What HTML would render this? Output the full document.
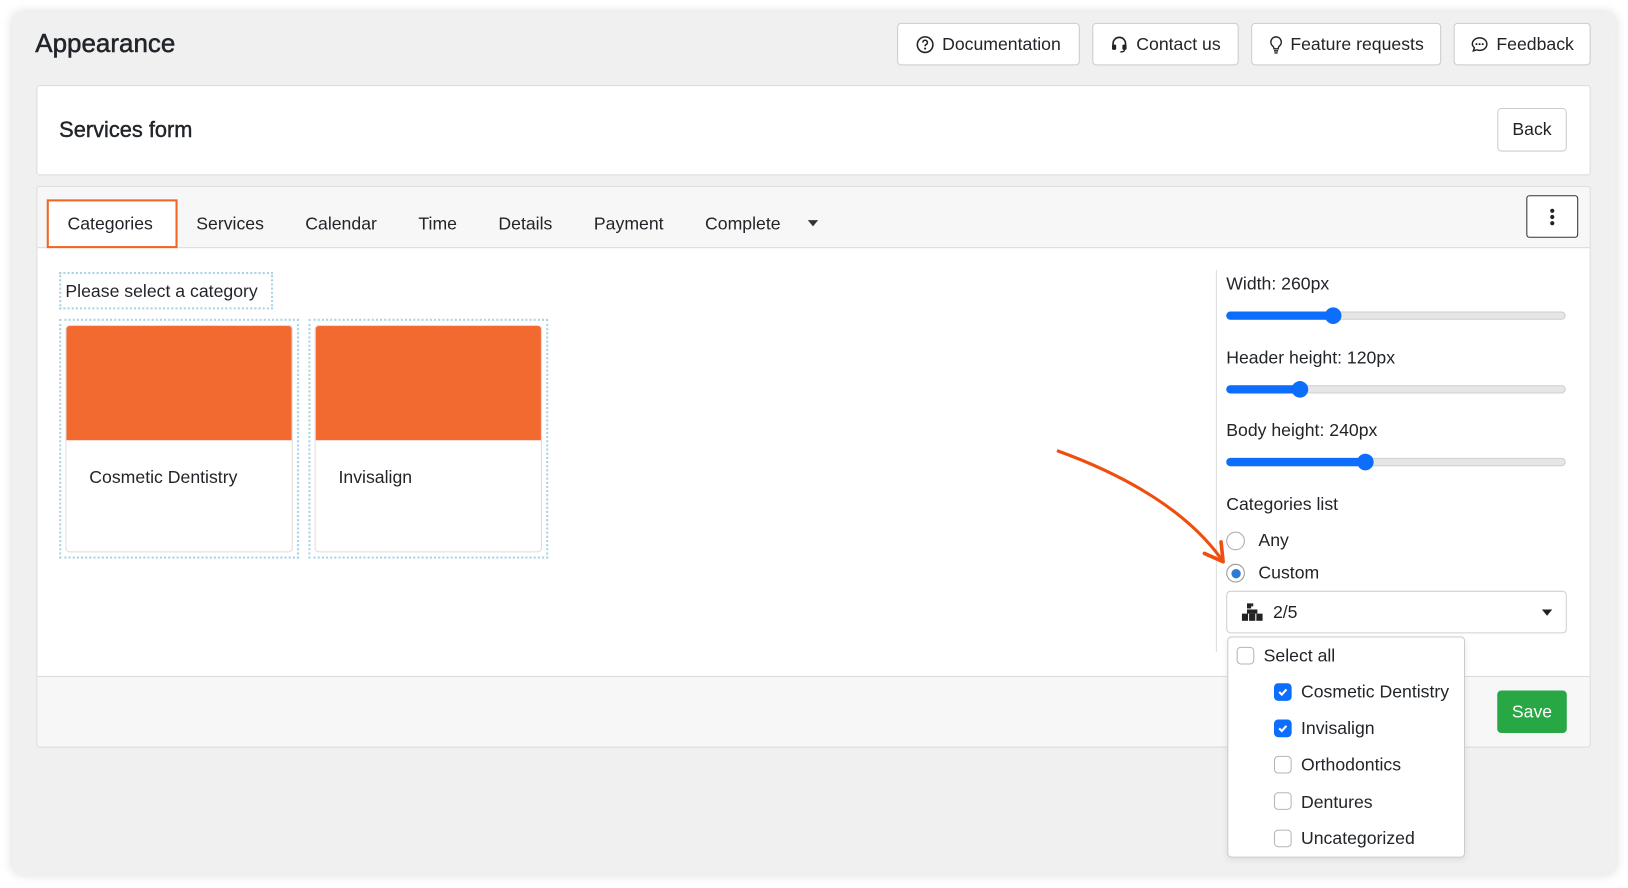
<!DOCTYPE html>
<html><head><meta charset="utf-8"><style>
*{box-sizing:border-box;margin:0;padding:0}
html,body{width:1628px;height:888px;overflow:hidden;background:#fff;font-family:"Liberation Sans",sans-serif;color:#212529}
#s{position:absolute;left:0;top:0;width:1568px;height:855px;transform:scale(1.0383);transform-origin:0 0}
.a{position:absolute}
.frame{left:12px;top:12px;width:1544px;height:830px;background:#f0f0f0;border-radius:10px;box-shadow:0 0 10px rgba(0,0,0,.15)}
.btn{position:absolute;background:#fff;border:1px solid #ccc;border-radius:4px;font-size:17px;display:flex;align-items:center;justify-content:center;gap:7px}
.card{position:absolute;background:#fff;border:1px solid #dcdcdc;border-radius:3px}
.tab{position:absolute;top:206px;font-size:17px}
.lbl{position:absolute;left:1181px;font-size:17px}
.track{position:absolute;left:1181px;width:327px;height:8px;border-radius:4px;background:#e6e6e6;border:1px solid #cfcfcf}
.fill{position:absolute;left:-1px;top:-1px;height:8px;border-radius:4px;background:#0d6efd}
.thumb{position:absolute;top:-5px;width:16px;height:16px;border-radius:50%;background:#0d6efd}
.cb{position:absolute;width:17px;height:17px;border:1px solid #b5b5b5;border-radius:4px;background:#fff}
.cb.on{background:#0d6efd;border-color:#0d6efd}
.it{position:absolute;font-size:17px}
.dot{border:2px dotted #a9d3e8}
</style></head><body><div id="s">
<div class="a frame"></div>
<div class="a" style="left:34px;top:28px;font-size:25px;-webkit-text-stroke:0.5px #212529">Appearance</div>
<div class="btn" style="left:864px;top:22px;width:176px;height:41px"><svg width="18" height="18" viewBox="0 0 18 18"><circle cx="9" cy="9" r="7.5" fill="none" stroke="#222" stroke-width="1.5"/><path d="M6.8 7a2.2 2.2 0 1 1 3 2c-.7.3-.8.8-.8 1.5" fill="none" stroke="#222" stroke-width="1.5"/><circle cx="9" cy="12.8" r="1" fill="#222"/></svg>Documentation</div>
<div class="btn" style="left:1052px;top:22px;width:141px;height:41px"><svg width="18" height="18" viewBox="0 0 18 18"><path d="M3 10V8a6 6 0 0 1 12 0v2" fill="none" stroke="#222" stroke-width="1.6"/><rect x="2" y="9" width="4" height="5" rx="1" fill="#222"/><rect x="12" y="9" width="4" height="5" rx="1" fill="#222"/><path d="M14 14q0 2-4 2" fill="none" stroke="#222" stroke-width="1.4"/></svg>Contact us</div>
<div class="btn" style="left:1205px;top:22px;width:183px;height:41px"><svg width="14" height="18" viewBox="0 0 14 18"><path d="M7 1.5a5 5 0 0 0-3 9c.6.6 1 1.4 1 2.5h4c0-1.1.4-1.9 1-2.5a5 5 0 0 0-3-9z" fill="none" stroke="#222" stroke-width="1.4"/><path d="M5 15h4M5.5 17h3" stroke="#222" stroke-width="1.4"/></svg>Feature requests</div>
<div class="btn" style="left:1400px;top:22px;width:132px;height:41px"><svg width="18" height="18" viewBox="0 0 18 18"><path d="M9 2.5c4 0 7 2.6 7 6s-3 6-7 6c-1 0-2-.2-2.8-.5L3 15l1-3C3 11 2 10 2 8.5c0-3.4 3-6 7-6z" fill="none" stroke="#222" stroke-width="1.4"/><circle cx="6" cy="8.5" r="1" fill="#222"/><circle cx="9" cy="8.5" r="1" fill="#222"/><circle cx="12" cy="8.5" r="1" fill="#222"/></svg>Feedback</div>

<div class="card" style="left:35px;top:82px;width:1497px;height:87px"></div>
<div class="a" style="left:57px;top:114px;font-size:21px;-webkit-text-stroke:0.4px #212529">Services form</div>
<div class="btn" style="left:1442px;top:104px;width:67px;height:42px">Back</div>

<div class="card" style="left:35px;top:179px;width:1497px;height:541px;overflow:hidden">
<div class="a" style="left:0;top:0;width:100%;height:59px;background:#f7f7f7;border-bottom:1px solid #dcdcdc"></div>
<div class="a" style="left:0;top:471px;width:100%;height:70px;background:#f7f7f7;border-top:1px solid #dcdcdc"></div>
</div>
<div class="a" style="left:45px;top:192px;width:126px;height:47px;border:2px solid #f26522;background:#fff"></div>
<div class="tab" style="left:65px">Categories</div>
<div class="tab" style="left:189px">Services</div>
<div class="tab" style="left:294px">Calendar</div>
<div class="tab" style="left:403px">Time</div>
<div class="tab" style="left:480px">Details</div>
<div class="tab" style="left:572px">Payment</div>
<div class="tab" style="left:679px">Complete</div>
<div class="a" style="left:778px;top:212px;border-left:5px solid transparent;border-right:5px solid transparent;border-top:6px solid #333"></div>
<div class="a" style="left:1470px;top:188px;width:50px;height:41px;border:1px solid #333;border-radius:3px;background:#fff"><div class="a" style="left:22px;top:12px;width:4px;height:4px;border-radius:2px;background:#222;box-shadow:0 6px #222,0 12px #222"></div></div>

<div class="a dot" style="left:57px;top:262px;width:206px;height:36px;font-size:17px;padding:7px 0 0 4px">Please select a category</div>
<div class="a dot" style="left:57px;top:307px;width:231px;height:231px"></div>
<div class="a" style="left:63px;top:313px;width:219px;height:219px;border:1px solid #ddd;border-radius:4px;background:#fff;overflow:hidden"><div style="height:110px;background:#f26a30"></div><div style="font-size:17px;padding:26px 0 0 22px">Cosmetic Dentistry</div></div>
<div class="a dot" style="left:297px;top:307px;width:231px;height:231px"></div>
<div class="a" style="left:303px;top:313px;width:219px;height:219px;border:1px solid #ddd;border-radius:4px;background:#fff;overflow:hidden"><div style="height:110px;background:#f26a30"></div><div style="font-size:17px;padding:26px 0 0 22px">Invisalign</div></div>

<div class="a" style="left:1171px;top:260px;width:1px;height:368px;background:#ddd"></div>
<div class="lbl" style="top:264px">Width: 260px</div>
<div class="track" style="top:300px"><div class="fill" style="width:103px"></div><div class="thumb" style="left:94px"></div></div>
<div class="lbl" style="top:335px">Header height: 120px</div>
<div class="track" style="top:371px"><div class="fill" style="width:71px"></div><div class="thumb" style="left:62px"></div></div>
<div class="lbl" style="top:405px">Body height: 240px</div>
<div class="track" style="top:441px"><div class="fill" style="width:134px"></div><div class="thumb" style="left:125px"></div></div>
<div class="lbl" style="top:476px">Categories list</div>
<div class="a" style="left:1181px;top:512px;width:18px;height:18px;border:1px solid #aaa;border-radius:50%;background:#fff"></div>
<div class="lbl" style="left:1212px;top:511px">Any</div>
<div class="a" style="left:1181px;top:543px;width:18px;height:18px;border:1px solid #999;border-radius:50%;background:#fff"><div class="a" style="left:3.5px;top:3.5px;width:9px;height:9px;border-radius:50%;background:#2b7bd6"></div></div>
<div class="lbl" style="left:1212px;top:542px">Custom</div>
<div class="a" style="left:1181px;top:569px;width:328px;height:41px;border:1px solid #d0d0d0;border-radius:4px;background:#fff"></div>
<svg class="a" style="left:1196px;top:581px" width="21" height="17" viewBox="0 0 21 17"><rect x="5" y="0" width="4" height="5" fill="#222"/><rect x="9" y="0" width="2" height="3" fill="#222"/><rect x="5" y="6" width="10" height="4" fill="#222"/><rect x="0" y="10" width="6" height="7" fill="#222"/><rect x="7" y="10" width="6" height="7" fill="#222"/><rect x="14" y="10" width="6" height="7" fill="#222"/></svg>
<div class="lbl" style="left:1226px;top:580px">2/5</div>
<div class="a" style="left:1485px;top:587px;border-left:5px solid transparent;border-right:5px solid transparent;border-top:6px solid #222"></div>

<div class="btn" style="left:1442px;top:665px;width:67px;height:41px;background:#28a745;border-color:#28a745;color:#fff">Save</div>

<div class="a" style="left:1182px;top:613px;width:229px;height:213px;border:1px solid #ccc;border-radius:4px;background:#fff;box-shadow:0 2px 6px rgba(0,0,0,.08)"></div>
<div class="cb" style="left:1191px;top:623px"></div><div class="it" style="left:1217px;top:622px">Select all</div>
<div class="cb on" style="left:1227px;top:658px"><svg width="15" height="15" viewBox="0 0 15 15"><path d="M4 7.5l2.5 2.5 4.5-5" fill="none" stroke="#fff" stroke-width="2"/></svg></div><div class="it" style="left:1253px;top:657px">Cosmetic Dentistry</div>
<div class="cb on" style="left:1227px;top:693px"><svg width="15" height="15" viewBox="0 0 15 15"><path d="M4 7.5l2.5 2.5 4.5-5" fill="none" stroke="#fff" stroke-width="2"/></svg></div><div class="it" style="left:1253px;top:692px">Invisalign</div>
<div class="cb" style="left:1227px;top:728px"></div><div class="it" style="left:1253px;top:727px">Orthodontics</div>
<div class="cb" style="left:1227px;top:763px"></div><div class="it" style="left:1253px;top:763px">Dentures</div>
<div class="cb" style="left:1227px;top:799px"></div><div class="it" style="left:1253px;top:798px">Uncategorized</div>

<svg class="a" style="left:0;top:0" width="1568" height="855"><path d="M1018 434C1090 460 1145 495 1176 538" fill="none" stroke="#f04e0f" stroke-width="3"/><path d="M1160 533L1178 541L1176 522" fill="none" stroke="#f04e0f" stroke-width="3.5" stroke-linejoin="round" stroke-linecap="round"/></svg>
</div></body></html>
